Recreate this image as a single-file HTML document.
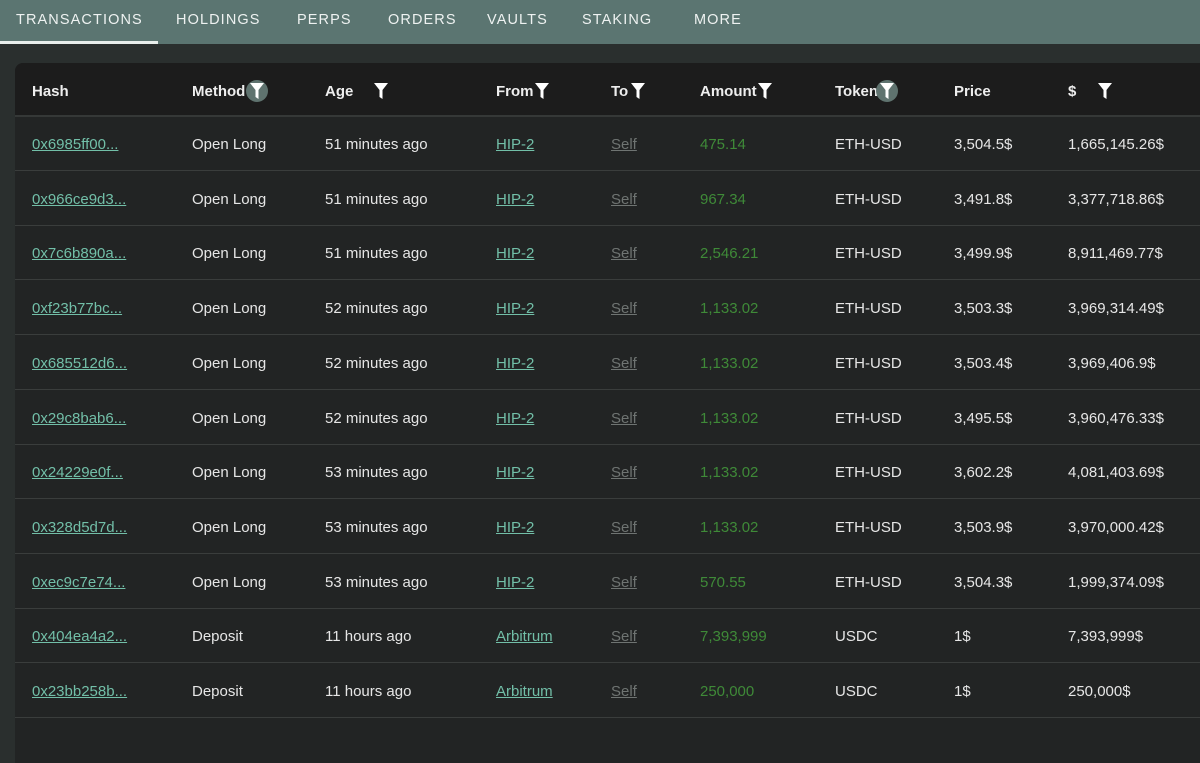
<!DOCTYPE html>
<html><head><meta charset="utf-8"><style>
*{margin:0;padding:0;box-sizing:border-box}
body{width:1200px;height:716px;overflow:hidden;background:#2a2f2e;font-family:"Liberation Sans",sans-serif;color:#e6e6e6;position:relative}
.tabs{position:absolute;left:0;top:0;width:1200px;height:44px;background:#5b7571}
.tab{position:absolute;top:12px;font-size:14.5px;letter-spacing:1.1px;color:#eef2f1;font-weight:500}
.ul{position:absolute;left:0;top:41px;width:158px;height:3px;background:#e8eeec}
.card{position:absolute;left:15px;top:63px;width:1200px;height:700px;background:#222424;border-radius:8px 0 0 0}
.head{position:absolute;left:0;top:0;width:100%;height:54px;background:#1c1c1c;border-radius:8px 0 0 0;border-bottom:2px solid #353837}
.h{position:absolute;top:20px;font-size:15px;font-weight:bold;color:#eee}
.f{position:absolute;top:19px}
.c{position:absolute;top:17px;width:22px;height:22px;border-radius:50%;background:#5f736f}
.row{position:absolute;left:0;width:100%;height:55px;border-bottom:1px solid #3a3d3c}
.t{position:absolute;top:20px;font-size:15px;color:#e6e6e6;white-space:nowrap}
.l{color:#72bfa8;text-decoration:underline}
.s{color:#6f7472;text-decoration:underline}
.g{color:#3f8a38}
</style></head><body>
<div class="tabs">
<span class="tab" style="left:16px">TRANSACTIONS</span>
<span class="tab" style="left:176px">HOLDINGS</span>
<span class="tab" style="left:297px">PERPS</span>
<span class="tab" style="left:388px">ORDERS</span>
<span class="tab" style="left:487px">VAULTS</span>
<span class="tab" style="left:582px">STAKING</span>
<span class="tab" style="left:694px">MORE</span>
<div class="ul"></div>
</div>
<div class="card">
<div class="head">
<span class="h" style="left:17px">Hash</span>
<span class="h" style="left:177px">Method</span>
<div class="c" style="left:231px"></div><svg class="f" style="left:235px" width="14" height="18" viewBox="0 0 14 18"><path d="M0 1H14L8.5 8V17L5.5 15V8Z" fill="#fff"/></svg>
<span class="h" style="left:310px">Age</span>
<svg class="f" style="left:359px" width="14" height="18" viewBox="0 0 14 18"><path d="M0 1H14L8.5 8V17L5.5 15V8Z" fill="#fff"/></svg>
<span class="h" style="left:481px">From</span>
<svg class="f" style="left:520px" width="14" height="18" viewBox="0 0 14 18"><path d="M0 1H14L8.5 8V17L5.5 15V8Z" fill="#fff"/></svg>
<span class="h" style="left:596px">To</span>
<svg class="f" style="left:616px" width="14" height="18" viewBox="0 0 14 18"><path d="M0 1H14L8.5 8V17L5.5 15V8Z" fill="#fff"/></svg>
<span class="h" style="left:685px">Amount</span>
<svg class="f" style="left:743px" width="14" height="18" viewBox="0 0 14 18"><path d="M0 1H14L8.5 8V17L5.5 15V8Z" fill="#fff"/></svg>
<span class="h" style="left:820px">Token</span>
<div class="c" style="left:861px"></div><svg class="f" style="left:865px" width="14" height="18" viewBox="0 0 14 18"><path d="M0 1H14L8.5 8V17L5.5 15V8Z" fill="#fff"/></svg>
<span class="h" style="left:939px">Price</span>
<span class="h" style="left:1053px">$</span>
<svg class="f" style="left:1083px" width="14" height="18" viewBox="0 0 14 18"><path d="M0 1H14L8.5 8V17L5.5 15V8Z" fill="#fff"/></svg>
</div>
</div>
<div style="position:absolute;left:15px;top:116px;width:1185px">
<div class="row" style="top:0"><span class="t l" style="left:17px">0x6985ff00...</span><span class="t" style="left:177px">Open Long</span><span class="t" style="left:310px">51 minutes ago</span><span class="t l" style="left:481px">HIP-2</span><span class="t s" style="left:596px">Self</span><span class="t g" style="left:685px">475.14</span><span class="t" style="left:820px">ETH-USD</span><span class="t" style="left:939px">3,504.5$</span><span class="t" style="left:1053px">1,665,145.26$</span></div>
<div class="row" style="top:54.7px"><span class="t l" style="left:17px">0x966ce9d3...</span><span class="t" style="left:177px">Open Long</span><span class="t" style="left:310px">51 minutes ago</span><span class="t l" style="left:481px">HIP-2</span><span class="t s" style="left:596px">Self</span><span class="t g" style="left:685px">967.34</span><span class="t" style="left:820px">ETH-USD</span><span class="t" style="left:939px">3,491.8$</span><span class="t" style="left:1053px">3,377,718.86$</span></div>
<div class="row" style="top:109.4px"><span class="t l" style="left:17px">0x7c6b890a...</span><span class="t" style="left:177px">Open Long</span><span class="t" style="left:310px">51 minutes ago</span><span class="t l" style="left:481px">HIP-2</span><span class="t s" style="left:596px">Self</span><span class="t g" style="left:685px">2,546.21</span><span class="t" style="left:820px">ETH-USD</span><span class="t" style="left:939px">3,499.9$</span><span class="t" style="left:1053px">8,911,469.77$</span></div>
<div class="row" style="top:164.1px"><span class="t l" style="left:17px">0xf23b77bc...</span><span class="t" style="left:177px">Open Long</span><span class="t" style="left:310px">52 minutes ago</span><span class="t l" style="left:481px">HIP-2</span><span class="t s" style="left:596px">Self</span><span class="t g" style="left:685px">1,133.02</span><span class="t" style="left:820px">ETH-USD</span><span class="t" style="left:939px">3,503.3$</span><span class="t" style="left:1053px">3,969,314.49$</span></div>
<div class="row" style="top:218.8px"><span class="t l" style="left:17px">0x685512d6...</span><span class="t" style="left:177px">Open Long</span><span class="t" style="left:310px">52 minutes ago</span><span class="t l" style="left:481px">HIP-2</span><span class="t s" style="left:596px">Self</span><span class="t g" style="left:685px">1,133.02</span><span class="t" style="left:820px">ETH-USD</span><span class="t" style="left:939px">3,503.4$</span><span class="t" style="left:1053px">3,969,406.9$</span></div>
<div class="row" style="top:273.5px"><span class="t l" style="left:17px">0x29c8bab6...</span><span class="t" style="left:177px">Open Long</span><span class="t" style="left:310px">52 minutes ago</span><span class="t l" style="left:481px">HIP-2</span><span class="t s" style="left:596px">Self</span><span class="t g" style="left:685px">1,133.02</span><span class="t" style="left:820px">ETH-USD</span><span class="t" style="left:939px">3,495.5$</span><span class="t" style="left:1053px">3,960,476.33$</span></div>
<div class="row" style="top:328.2px"><span class="t l" style="left:17px">0x24229e0f...</span><span class="t" style="left:177px">Open Long</span><span class="t" style="left:310px">53 minutes ago</span><span class="t l" style="left:481px">HIP-2</span><span class="t s" style="left:596px">Self</span><span class="t g" style="left:685px">1,133.02</span><span class="t" style="left:820px">ETH-USD</span><span class="t" style="left:939px">3,602.2$</span><span class="t" style="left:1053px">4,081,403.69$</span></div>
<div class="row" style="top:382.9px"><span class="t l" style="left:17px">0x328d5d7d...</span><span class="t" style="left:177px">Open Long</span><span class="t" style="left:310px">53 minutes ago</span><span class="t l" style="left:481px">HIP-2</span><span class="t s" style="left:596px">Self</span><span class="t g" style="left:685px">1,133.02</span><span class="t" style="left:820px">ETH-USD</span><span class="t" style="left:939px">3,503.9$</span><span class="t" style="left:1053px">3,970,000.42$</span></div>
<div class="row" style="top:437.6px"><span class="t l" style="left:17px">0xec9c7e74...</span><span class="t" style="left:177px">Open Long</span><span class="t" style="left:310px">53 minutes ago</span><span class="t l" style="left:481px">HIP-2</span><span class="t s" style="left:596px">Self</span><span class="t g" style="left:685px">570.55</span><span class="t" style="left:820px">ETH-USD</span><span class="t" style="left:939px">3,504.3$</span><span class="t" style="left:1053px">1,999,374.09$</span></div>
<div class="row" style="top:492.3px"><span class="t l" style="left:17px">0x404ea4a2...</span><span class="t" style="left:177px">Deposit</span><span class="t" style="left:310px">11 hours ago</span><span class="t l" style="left:481px">Arbitrum</span><span class="t s" style="left:596px">Self</span><span class="t g" style="left:685px">7,393,999</span><span class="t" style="left:820px">USDC</span><span class="t" style="left:939px">1$</span><span class="t" style="left:1053px">7,393,999$</span></div>
<div class="row" style="top:547px"><span class="t l" style="left:17px">0x23bb258b...</span><span class="t" style="left:177px">Deposit</span><span class="t" style="left:310px">11 hours ago</span><span class="t l" style="left:481px">Arbitrum</span><span class="t s" style="left:596px">Self</span><span class="t g" style="left:685px">250,000</span><span class="t" style="left:820px">USDC</span><span class="t" style="left:939px">1$</span><span class="t" style="left:1053px">250,000$</span></div>
</div>
</body></html>
